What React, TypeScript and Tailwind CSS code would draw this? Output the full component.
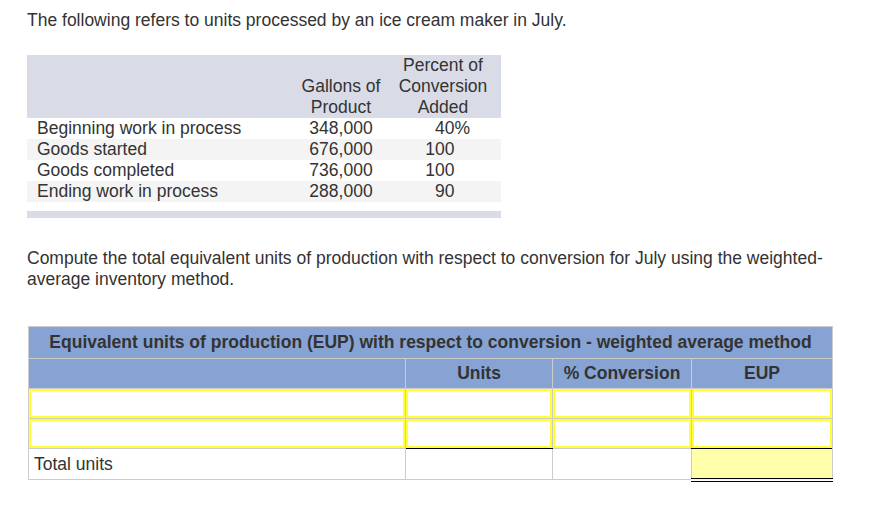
import React from "react";

const rows = [
  ["Beginning work in process", "348,000", "40", true],
  ["Goods started", "676,000", "100", false],
  ["Goods completed", "736,000", "100", false],
  ["Ending work in process", "288,000", "90", false],
] as const;

function InputBox() {
  return <div className="h-full w-full border-2 border-[#ffff33] bg-white" />;
}

export default function App() {
  return (
    <div className="w-[881px] h-[530px] bg-white text-[#333] font-['Liberation_Sans',Arial,sans-serif] text-[17.5px] leading-[21px]">
      <p className="pl-[27px] pt-[10px]">
        The following refers to units processed by an ice cream maker in July.
      </p>

      <div className="ml-[27px] mt-[24px] w-[474px]">
        <div className="grid grid-cols-[270px_88px_116px] bg-[#d9dce6] h-[63px]">
          <div />
          <div className="flex flex-col justify-end text-center">
            <span>Gallons of</span>
            <span>Product</span>
          </div>
          <div className="flex flex-col justify-end text-center">
            <span>Percent of</span>
            <span>Conversion</span>
            <span>Added</span>
          </div>
        </div>
        {rows.map(([label, gal, pct, showPct], i) => (
          <div
            key={label}
            className={`grid grid-cols-[270px_88px_116px] h-[21px] ${i % 2 === 1 ? "bg-[#f4f4f4]" : "bg-white"}`}
          >
            <div className="pl-[10px]">{label}</div>
            <div className="text-center">{gal}</div>
            <div className="text-right pr-[31px]">
              {pct}
              <span className={showPct ? "" : "invisible"}>%</span>
            </div>
          </div>
        ))}
        <div className="h-[9px]" />
        <div className="h-[7px] bg-[#d9dce6]" />
      </div>

      <p className="ml-[27px] mt-[30px] w-[830px]">
        Compute the total equivalent units of production with respect to conversion for July using the weighted-average inventory method.
      </p>

      <table className="ml-[28px] mt-[36px] border-collapse border border-[#cccccc] w-[804px] table-fixed">
        <colgroup>
          <col className="w-[377px]" />
          <col className="w-[147px]" />
          <col className="w-[139px]" />
          <col className="w-[141px]" />
        </colgroup>
        <tbody>
          <tr className="h-[32px] bg-[#87a3d3]">
            <td colSpan={4} className="border border-[#cccccc] text-center font-bold p-0 align-middle">
              Equivalent units of production (EUP) with respect to conversion - weighted average method
            </td>
          </tr>
          <tr className="h-[30px] bg-[#87a3d3] font-bold">
            <td className="border border-[#cccccc] p-0" />
            <td className="border border-[#cccccc] p-0 text-center">Units</td>
            <td className="border border-[#cccccc] p-0 text-center">% Conversion</td>
            <td className="border border-[#cccccc] p-0 text-center">EUP</td>
          </tr>
          {[0, 1].map((r) => (
            <tr key={r} className="h-[30px]">
              <td className="border border-[#cccccc] p-0 h-[30px]"><InputBox /></td>
              <td className={`border border-[#cccccc] p-0 h-[30px] ${r === 1 ? "border-b-black" : ""}`}><InputBox /></td>
              <td className="border border-[#cccccc] p-0 h-[30px]"><InputBox /></td>
              <td className={`border border-[#cccccc] p-0 h-[30px] ${r === 1 ? "border-b-black" : ""}`}><InputBox /></td>
            </tr>
          ))}
          <tr className="h-[31px]">
            <td className="border border-[#cccccc] p-0 pl-[5px] align-middle">Total units</td>
            <td className="border border-[#cccccc] border-t-black p-0" />
            <td className="border border-[#cccccc] p-0" />
            <td className="border border-[#cccccc] border-t-black border-b-4 border-b-black border-double bg-[#ffffaa] p-0" />
          </tr>
        </tbody>
      </table>
    </div>
  );
}
